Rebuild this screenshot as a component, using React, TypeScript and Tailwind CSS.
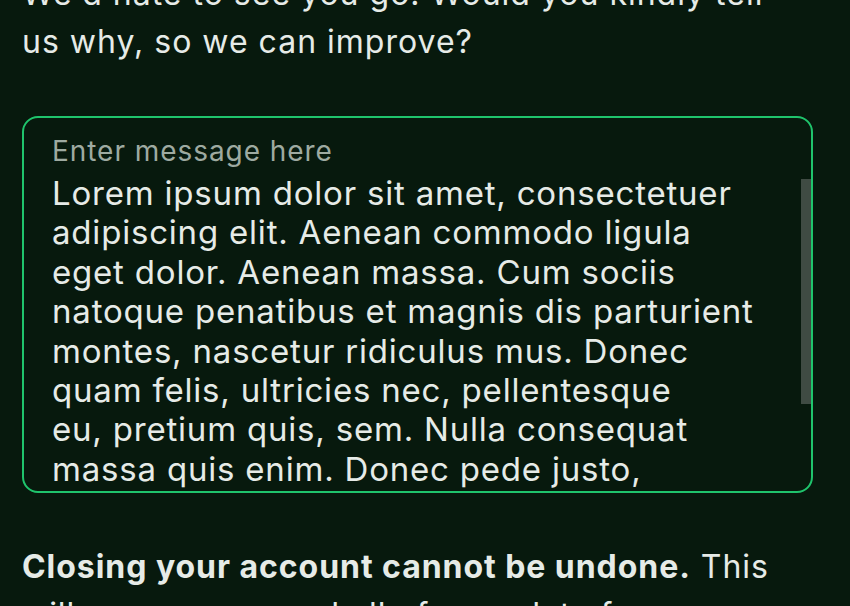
import React from 'react';

const lines = [
  'Lorem ipsum dolor sit amet, consectetuer',
  'adipiscing elit. Aenean commodo ligula',
  'eget dolor. Aenean massa. Cum sociis',
  'natoque penatibus et magnis dis parturient',
  'montes, nascetur ridiculus mus. Donec',
  'quam felis, ultricies nec, pellentesque',
  'eu, pretium quis, sem. Nulla consequat',
  'massa quis enim. Donec pede justo,',
  'fringilla vel, aliquet nec, vulputate',
];

export default function App() {
  return (
    <div
      className="h-[606px] w-full overflow-hidden bg-[#07190d] px-[22px] text-[#e6ebe7]"
      style={{ fontFamily: 'Inter, "Liberation Sans", sans-serif' }}
    >
      {/* Intro */}
      <p className="-mt-[30px] text-[32px] leading-[48px] tracking-[1px]">
        We'd hate to see you go. Would you kindly tell
        <br />
        us why, so we can improve?
      </p>

      {/* Message box */}
      <div className="relative mt-[50px] h-[377px] w-[791px] overflow-hidden rounded-2xl border-2 border-[#1fc46c] pl-[28px] pt-[16px]">
        <label className="block text-[28px] leading-[34px] tracking-[0.95px] text-[#9eaaa1]">
          Enter message here
        </label>
        <div className="mt-[6px] text-[33px] leading-[39.4px] tracking-[0.8px]">
          {lines.map((line) => (
            <div key={line} className="whitespace-nowrap">
              {line}
            </div>
          ))}
        </div>
        <div className="absolute right-[0px] top-[61px] h-[225px] w-[10px] bg-[#3f4b43]" />
      </div>

      {/* Warning */}
      <p className="mt-[50px] text-[32px] leading-[48px] tracking-[0.95px]">
        <span className="font-bold">Closing your account cannot be undone.</span> This
        <br />
        will remove any and all of your data from our servers.
      </p>
    </div>
  );
}
